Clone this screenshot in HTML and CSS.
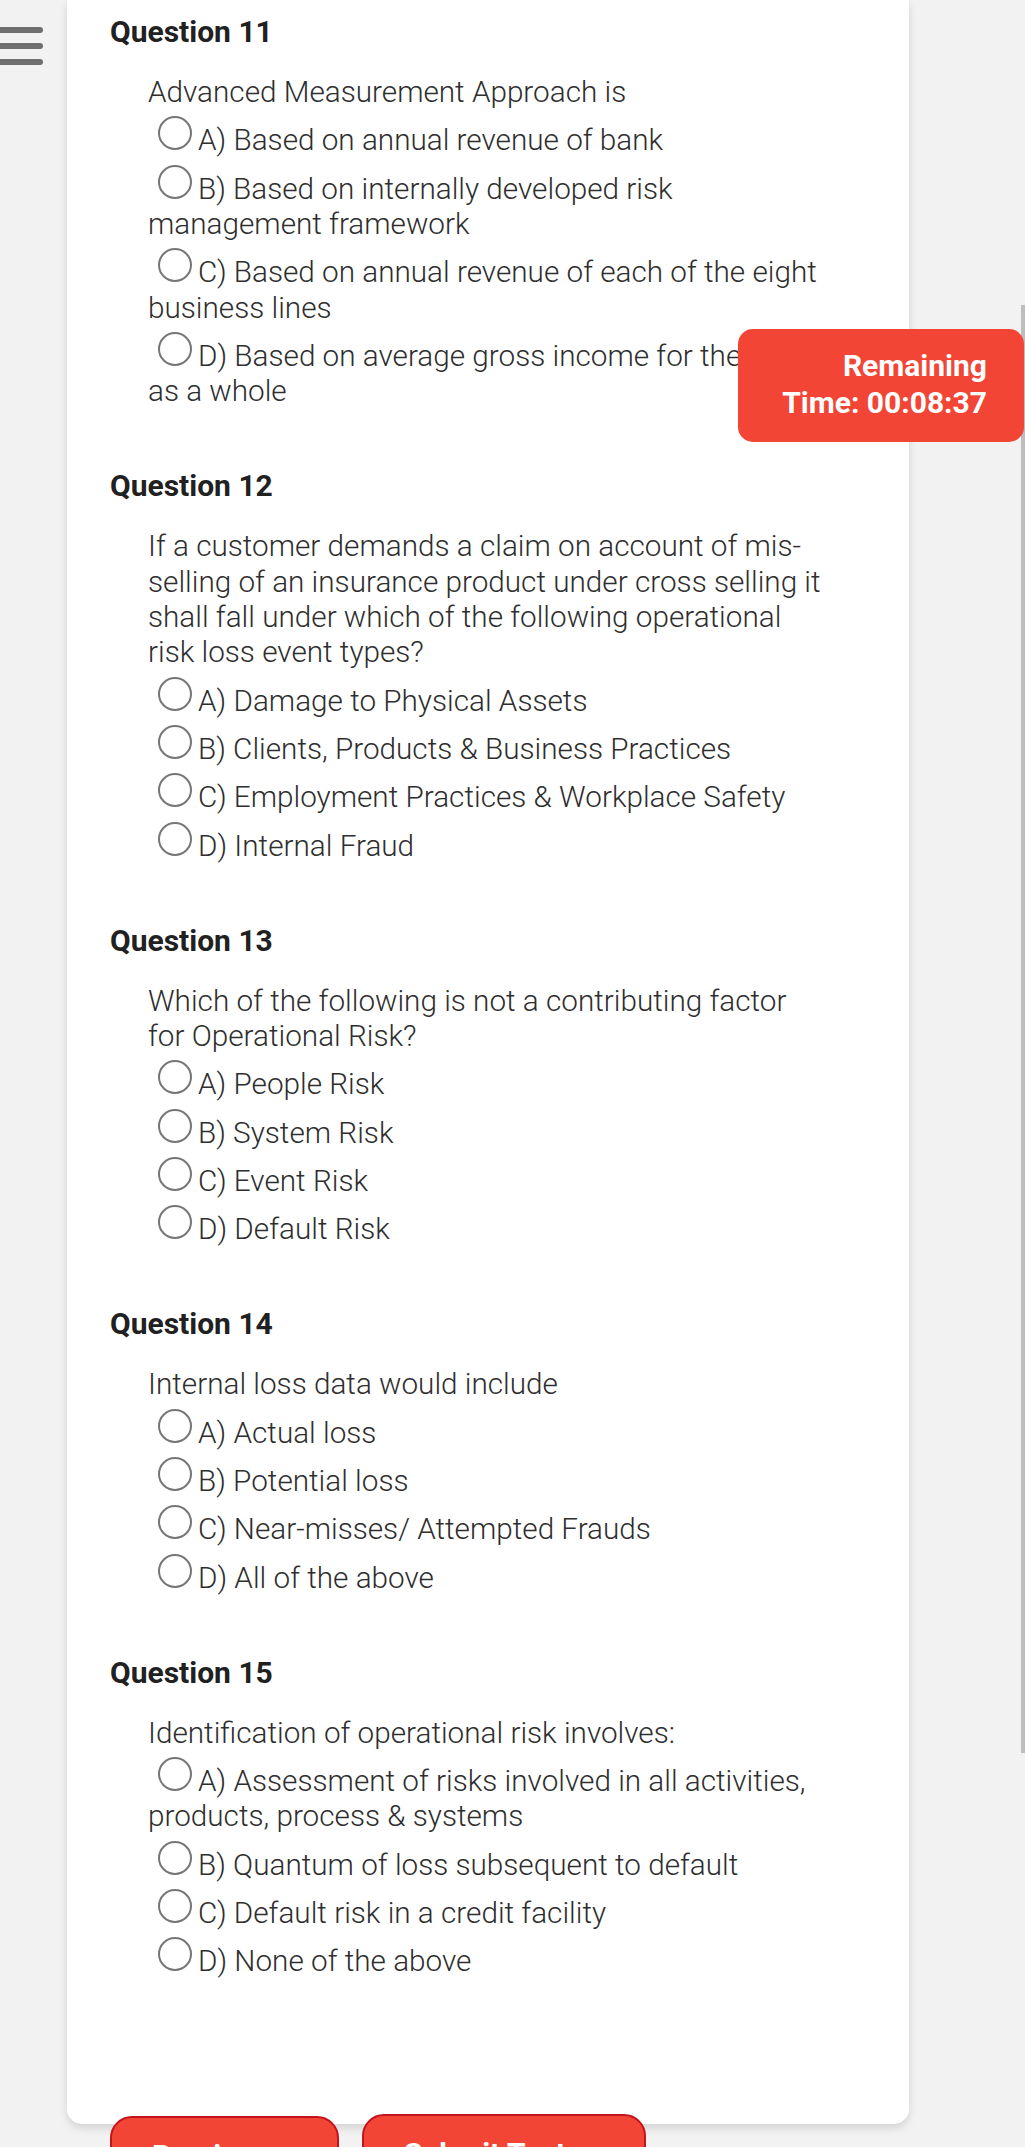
FILE: index.html
```html
<!DOCTYPE html>
<html lang="en">
<head>
<meta charset="utf-8">
<title>Test</title>
<link rel="stylesheet" href="styles.css">
</head>
<body>
<div class="menu" aria-label="Menu"><span></span><span></span><span></span></div>

<main class="card">
  <section class="question">
    <h2 class="q-title">Question 11</h2>
    <div class="q-body">
      <p class="q-stem">Advanced Measurement Approach is</p>
      <label class="option"><span class="radio"></span>A) Based on annual revenue of bank</label>
      <label class="option"><span class="radio"></span>B) Based on internally developed risk management framework</label>
      <label class="option"><span class="radio"></span>C) Based on annual revenue of each of the eight business lines</label>
      <label class="option"><span class="radio"></span>D) Based on average gross income for the bank as a whole</label>
    </div>
  </section>

  <section class="question">
    <h2 class="q-title">Question 12</h2>
    <div class="q-body">
      <p class="q-stem">If a customer demands a claim on account of mis-selling of an insurance product under cross selling it shall fall under which of the following operational risk loss event types?</p>
      <label class="option"><span class="radio"></span>A) Damage to Physical Assets</label>
      <label class="option"><span class="radio"></span>B) Clients, Products &amp; Business Practices</label>
      <label class="option"><span class="radio"></span>C) Employment Practices &amp; Workplace Safety</label>
      <label class="option"><span class="radio"></span>D) Internal Fraud</label>
    </div>
  </section>

  <section class="question">
    <h2 class="q-title">Question 13</h2>
    <div class="q-body">
      <p class="q-stem">Which of the following is not a contributing factor for Operational Risk?</p>
      <label class="option"><span class="radio"></span>A) People Risk</label>
      <label class="option"><span class="radio"></span>B) System Risk</label>
      <label class="option"><span class="radio"></span>C) Event Risk</label>
      <label class="option"><span class="radio"></span>D) Default Risk</label>
    </div>
  </section>

  <section class="question">
    <h2 class="q-title">Question 14</h2>
    <div class="q-body">
      <p class="q-stem">Internal loss data would include</p>
      <label class="option"><span class="radio"></span>A) Actual loss</label>
      <label class="option"><span class="radio"></span>B) Potential loss</label>
      <label class="option"><span class="radio"></span>C) Near-misses/ Attempted Frauds</label>
      <label class="option"><span class="radio"></span>D) All of the above</label>
    </div>
  </section>

  <section class="question">
    <h2 class="q-title">Question 15</h2>
    <div class="q-body">
      <p class="q-stem">Identification of operational risk involves:</p>
      <label class="option"><span class="radio"></span>A) Assessment of risks involved in all activities, products, process &amp; systems</label>
      <label class="option"><span class="radio"></span>B) Quantum of loss subsequent to default</label>
      <label class="option"><span class="radio"></span>C) Default risk in a credit facility</label>
      <label class="option"><span class="radio"></span>D) None of the above</label>
    </div>
  </section>
</main>

<div class="actions">
  <button class="btn btn-prev" type="button">Previous</button>
  <button class="btn btn-submit" type="button">Submit Test</button>
</div>

<div class="scrollbar"></div>
<div class="timer">Remaining<br>Time: 00:08:37</div>
</body>
</html>
```

FILE: styles.css
```css
html, body {
  height: 100%;
  overflow: hidden;
}

body {
  margin: 0;
  background: #f2f2f2;
  font-family: Roboto, "Liberation Sans", Arial, sans-serif;
  color: #2b2b2b;
}

.menu {
  position: fixed;
  top: 27px;
  left: 0;
  width: 43px;
  display: flex;
  flex-direction: column;
  gap: 10px;
}

.menu span {
  display: block;
  height: 6px;
  background: #6f6f6f;
  border-radius: 0 3px 3px 0;
}

.card {
  margin-left: 67px;
  width: 842px;
  box-sizing: border-box;
  padding: 14px 43px 145px;
  background: #ffffff;
  border-radius: 0 0 15px 15px;
  box-shadow: 0 4px 8px rgba(0, 0, 0, 0.13);
}

.question {
  margin-bottom: 59.6px;
}

.question:last-child {
  margin-bottom: 0;
}

.q-title {
  margin: 0 0 24px;
  font-size: 30px;
  line-height: 36px;
  font-weight: 700;
  color: #212121;
}

.q-body {
  margin: 0 38px;
  font-family: "Roboto Light", Roboto, "Liberation Sans", Arial, sans-serif;
  font-size: 29.7px;
  line-height: 35.35px;
  font-weight: 300;
  color: #2e2e2e;
}

.q-stem {
  margin: 0;
}

.option {
  display: block;
}

.radio {
  display: inline-block;
  width: 34px;
  height: 34px;
  box-sizing: border-box;
  border: 2.5px solid #767676;
  border-radius: 50%;
  margin: 7px 6px 0 10px;
  vertical-align: baseline;
  background: #fff;
}

.actions {
  position: relative;
  margin: -10px 0 0 110px;
  display: flex;
  align-items: flex-start;
  gap: 23px;
}

.btn {
  box-sizing: border-box;
  background: #f24535;
  border: 2px solid #c3141e;
  border-radius: 22px;
  color: #ffffff;
  font-family: Roboto, "Liberation Sans", Arial, sans-serif;
  font-size: 30px;
  line-height: 36px;
  font-weight: 700;
  padding: 20px 40px 20px;
  text-align: left;
}

.btn-prev {
  width: 229px;
  margin-top: 2px;
}

.btn-submit {
  width: 284px;
}

.scrollbar {
  position: fixed;
  top: 305px;
  right: 0;
  width: 4px;
  height: 1448px;
  background: #bdbdbd;
}

.timer {
  position: fixed;
  top: 329px;
  right: 1px;
  width: 286px;
  box-sizing: border-box;
  padding: 18px 37px 21px;
  background: #f24535;
  border-radius: 15px;
  color: #ffffff;
  font-size: 30px;
  line-height: 37px;
  font-weight: 700;
  text-align: right;
}
```
